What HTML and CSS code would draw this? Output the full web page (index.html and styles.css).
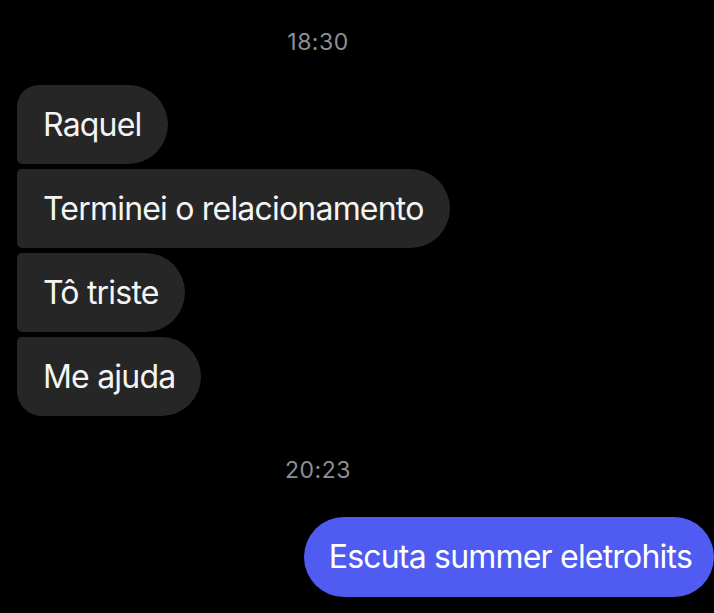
FILE: index.html
```html
<!DOCTYPE html>
<html lang="pt-BR">
<head>
    <meta charset="UTF-8">
    <meta name="viewport" content="width=device-width, initial-scale=1.0">
    <title>Conversa</title>
<link rel="stylesheet" href="styles.css">
</head>
<body>
    <div class="chat">
        <div class="time">18:30</div>

        <div class="group">
            <div class="bubble first">Raquel</div>
            <div class="bubble">Terminei o relacionamento</div>
            <div class="bubble">Tô triste</div>
            <div class="bubble last">Me ajuda</div>
        </div>

        <div class="time second">20:23</div>

        <div class="bubble mine">Escuta summer eletrohits</div>
    </div>
</body>
</html>
```

FILE: styles.css
```css
body{
  margin: 0;
  background-color: #000;
  font-family: Inter, "Noto Sans", sans-serif;
  color: #f4f4f4;
}

.chat{
  display: flex;
  flex-direction: column;
  padding-top: 26px;
  min-height: 613px;
  box-sizing: border-box;
  overflow: hidden;
}

.time{
  text-align: center;
  padding-right: 78px;
  font-size: 23px;
  line-height: 32px;
  letter-spacing: 0.5px;
  color: #8e8e93;
}

.second{
  margin-top: 38px;
}

.group{
  display: flex;
  flex-direction: column;
  align-items: flex-start;
  gap: 5px;
  margin-top: 27px;
  padding-left: 17px;
}

.bubble{
  background-color: #262626;
  font-size: 32px;
  letter-spacing: -0.8px;
  height: 79px;
  line-height: 79px;
  padding: 0 26px;
  border-radius: 5px 40px 40px 5px;
  white-space: nowrap;
}

.first{
  border-top-left-radius: 22px;
}

.last{
  border-bottom-left-radius: 25px;
}

.mine{
  align-self: flex-end;
  margin-top: 31px;
  height: 80px;
  line-height: 80px;
  padding: 0 22px 0 25px;
  background-color: #4f5bf1;
  color: #fff;
  border-radius: 40px;
}
```
